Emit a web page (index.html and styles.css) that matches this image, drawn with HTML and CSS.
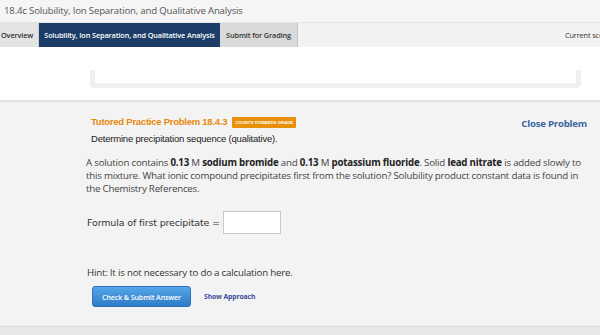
FILE: index.html
```html
<!DOCTYPE html>
<html lang="en">
<head>
    <meta charset="UTF-8">
    <meta name="viewport" content="width=device-width, initial-scale=1.0">
    <title>18.4c Solubility, Ion Separation, and Qualitative Analysis</title>
    <link rel="stylesheet" href="styles.css">
</head>
<body>

    <header class="titlebar">18.4c Solubility, Ion Separation, and Qualitative Analysis</header>

    <nav class="tabs">
        <a class="tab">Overview</a>
        <a class="tab active">Solubility, Ion Separation, and Qualitative Analysis</a>
        <a class="tab submit">Submit for Grading</a>
        <span class="spacer"></span>
        <span class="score">Current score</span>
    </nav>

    <div class="panel-wrap">
        <div class="panel"></div>
    </div>

    <main class="problem">
        <div class="problem-head">
            <div>
                <h1 class="problem-title">Tutored Practice Problem 18.4.3 <span class="badge">COUNTS TOWARDS GRADE</span></h1>
                <p class="subtitle">Determine precipitation sequence (qualitative).</p>
            </div>
            <a class="close">Close Problem</a>
        </div>

        <p class="question">A solution contains <b>0.13</b> M <b>sodium bromide</b> and <b>0.13</b> M <b>potassium fluoride</b>. Solid <b>lead nitrate</b> is added slowly to this mixture. What ionic compound precipitates first from the solution? Solubility product constant data is found in the Chemistry References.</p>

        <div class="answer">
            <label for="formula">Formula of first precipitate =</label>
            <input type="text" id="formula">
        </div>

        <p class="hint">Hint: It is not necessary to do a calculation here.</p>

        <div class="actions">
            <button class="submit-btn">Check &amp; Submit Answer</button>
            <a class="approach">Show Approach</a>
        </div>
    </main>

    <div class="footer-strip"></div>

</body>
</html>
```

FILE: styles.css
```css
* {
    box-sizing: border-box;
    margin: 0;
    padding: 0;
}

body {
    font-family: 'Open Sans', sans-serif;
    background-color: #e6e6e6;
    color: #333;
    overflow: hidden;
}

.titlebar {
    height: 23px;
    padding: 4px 0 0 4px;
    font-size: 9.6px;
    line-height: 14px;
    letter-spacing: -0.17px;
    color: #555;
    background-color: #f5f5f5;
    border-bottom: 1px solid #e4e4e4;
    white-space: nowrap;
}

.tabs {
    display: flex;
    height: 24px;
    background-color: #f2f2f2;
    white-space: nowrap;
    overflow: hidden;
}

.tab {
    display: flex;
    align-items: center;
    font-size: 7.3px;
    letter-spacing: -0.12px;
    font-weight: 600;
    color: #333;
}

.tab:first-child {
    width: 39px;
    padding-left: 1px;
    background-color: #e3e3e3;
    border-right: 1px solid #cfcfcf;
}

.tab.active {
    position: relative;
    width: 181px;
    justify-content: center;
    background-color: #1c3d67;
    color: #fff;
}

.tab.active::after {
    content: '';
    position: absolute;
    left: 74px;
    bottom: -4px;
    border-left: 3px solid transparent;
    border-right: 3px solid transparent;
    border-top: 4px solid #1c3d67;
}

.tab.submit {
    width: 78px;
    justify-content: center;
    background-color: #dadada;
    border-right: 1px solid #c4c4c4;
}

.spacer {
    flex: 1;
}

.score {
    display: flex;
    align-items: center;
    width: 35px;
    overflow: hidden;
    font-size: 7.3px;
    letter-spacing: -0.12px;
    color: #333;
}

.panel-wrap {
    height: 53px;
    padding: 23px 19px 12px 90px;
    background-color: #fff;
}

.panel {
    height: 100%;
    border: 5px solid #efefef;
    border-top: none;
    border-radius: 0 0 5px 5px;
}

.problem {
    height: 226px;
    padding: 14px 13px 0 86px;
    background-color: #f3f3f3;
    border-top: 2px solid #e2e2e2;
}

.problem-head {
    display: flex;
    justify-content: space-between;
    align-items: flex-start;
    padding-left: 5px;
}

.problem-title {
    display: flex;
    align-items: center;
    gap: 5px;
    font-family: 'Liberation Sans', Arial, sans-serif;
    font-size: 9.5px;
    line-height: 12px;
    letter-spacing: -0.25px;
    font-weight: 700;
    color: #e8890c;
}

.badge {
    padding: 3px;
    font-size: 4.3px;
    line-height: 5px;
    letter-spacing: 0;
    font-weight: 700;
    color: #fff;
    background-color: #e8900a;
    border-radius: 1px;
}

.subtitle {
    margin-top: 5px;
    font-family: 'Liberation Sans', Arial, sans-serif;
    font-size: 9.5px;
    line-height: 12px;
    letter-spacing: -0.2px;
    color: #222;
}

.close {
    margin-top: 1px;
    font-size: 9.6px;
    letter-spacing: -0.2px;
    font-weight: 700;
    color: #3a66a0;
}

.question {
    margin-top: 11px;
    font-size: 9.7px;
    line-height: 13px;
    letter-spacing: -0.2px;
    color: #444;
}

.question b {
    color: #222;
}

.answer {
    display: flex;
    align-items: center;
    margin-top: 16px;
    padding-left: 1px;
    font-family: 'DejaVu Sans', Verdana, sans-serif;
    font-size: 9.5px;
    letter-spacing: -0.15px;
    color: #333;
}

.answer label {
    margin-right: 3px;
}

.answer input {
    width: 58px;
    height: 23px;
    border: 1px solid #c8c8c8;
    background-color: #fff;
}

.hint {
    margin-top: 32px;
    padding-left: 1px;
    font-size: 9.7px;
    line-height: 13px;
    letter-spacing: -0.2px;
    color: #333;
}

.actions {
    display: flex;
    align-items: center;
    gap: 13px;
    margin-top: 7px;
    padding-left: 6px;
}

.submit-btn {
    width: 99px;
    height: 21px;
    font-family: 'Open Sans', sans-serif;
    font-size: 7.1px;
    letter-spacing: -0.12px;
    font-weight: 600;
    color: #fff;
    background: linear-gradient(#55a6e8, #2f7cc7);
    border: 1px solid #2d74bb;
    border-radius: 3px;
}

.approach {
    font-size: 6.8px;
    letter-spacing: -0.1px;
    font-weight: 700;
    color: #3a4d9a;
}

.footer-strip {
    height: 10px;
    border-top: 1px solid #dcdcdc;
    background-color: #e8e8e8;
}
```
